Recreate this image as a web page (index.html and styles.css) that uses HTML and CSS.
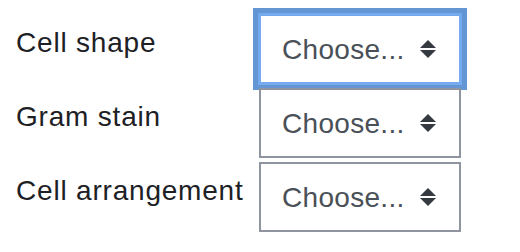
FILE: index.html
```html
<!DOCTYPE html>
<html lang="en">
<head>
    <meta charset="UTF-8">
    <meta name="viewport" content="width=device-width, initial-scale=1.0">
    <title>Bacteria identification</title>
    <link rel="stylesheet" href="styles.css">
</head>
<body>
    <form class="mform" id="bacteria-form">
        <div class="fitem">
            <label for="cell_shape">Cell shape</label>
            <div class="select-wrap">
                <select id="cell_shape" name="cell_shape" class="custom-select is-focused">
                    <option>Choose...</option>
                </select>
                <svg class="caret" width="16" height="18" viewBox="0 0 16 18"><polygon points="0,8 8,0 16,8"/><polygon points="0,10 16,10 8,18"/></svg>
            </div>
        </div>
        <div class="fitem">
            <label for="gram_stain">Gram stain</label>
            <div class="select-wrap">
                <select id="gram_stain" name="gram_stain" class="custom-select">
                    <option>Choose...</option>
                </select>
                <svg class="caret" width="16" height="18" viewBox="0 0 16 18"><polygon points="0,8 8,0 16,8"/><polygon points="0,10 16,10 8,18"/></svg>
            </div>
        </div>
        <div class="fitem">
            <label for="cell_arrangement">Cell arrangement</label>
            <div class="select-wrap">
                <select id="cell_arrangement" name="cell_arrangement" class="custom-select">
                    <option>Choose...</option>
                </select>
                <svg class="caret" width="16" height="18" viewBox="0 0 16 18"><polygon points="0,8 8,0 16,8"/><polygon points="0,10 16,10 8,18"/></svg>
            </div>
        </div>
    </form>
</body>
</html>
```

FILE: styles.css
```css
body {
    font-family: "Liberation Sans", Arial, sans-serif;
    background-color: #fff;
    margin: 0;
    padding: 0;
}

.mform {
    padding: 14px 0 0 16px;
}

.fitem {
    display: flex;
    align-items: flex-start;
    margin-bottom: 4px;
}

.fitem label {
    width: 243px;
    padding-top: 9px;
    font-size: 28px;
    line-height: 40px;
    letter-spacing: 0.8px;
    color: #1d2125;
}

.select-wrap {
    position: relative;
    width: 202px;
}

.custom-select {
    display: block;
    width: 100%;
    height: 70px;
    padding: 0 40px 0 21px;
    appearance: none;
    -webkit-appearance: none;
    background-color: #fff;
    border: 2px solid #8f959e;
    border-radius: 0;
    font-family: inherit;
    font-size: 28px;
    letter-spacing: 0.3px;
    color: #495057;
    box-sizing: border-box;
}

.custom-select.is-focused {
    border-color: #75aaee;
    box-shadow: 0 0 0 1px #75aaee, 0 0 0 6px #6596d4;
    outline: none;
}

.caret {
    position: absolute;
    right: 25px;
    top: 50%;
    transform: translateY(-50%);
    fill: #343a40;
    pointer-events: none;
}
```
